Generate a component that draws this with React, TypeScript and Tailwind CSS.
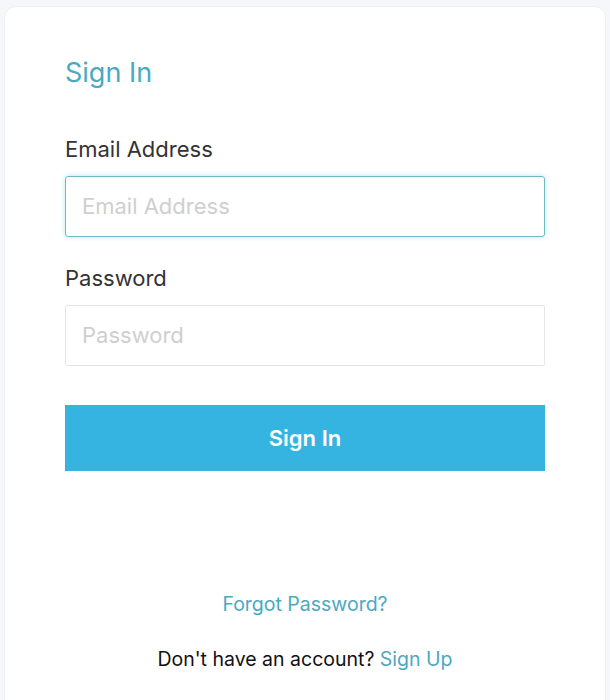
import React from "react";

export default function App() {
  return (
    <div className="min-h-[700px] w-[610px] bg-[#f6f7fb] pt-[6px] pl-[4px] pr-[4px] overflow-hidden" style={{ fontFamily: 'Inter, "Liberation Sans", sans-serif' }}>
      <div className="bg-white rounded-t-[12px] border border-[#eef0f4] h-[720px] px-[60px] pt-[44px]">
        <h1 className="text-[27px] leading-[44px] text-[#4ba9c1] font-normal">Sign In</h1>
        <div className="mt-[38px]">
          <label className="block text-[22px] leading-[32px] text-[#333333]">Email Address</label>
          <div className="mt-[11px] h-[61px] rounded-[3px] border border-[#6fb8c4] shadow-[0_0_5px_rgba(102,200,230,0.45)] flex items-center px-[16px]">
            <span className="text-[22px] text-[#cfcfcf]">Email Address</span>
          </div>
        </div>
        <div className="mt-[25px]">
          <label className="block text-[22px] leading-[32px] text-[#333333]">Password</label>
          <div className="mt-[11px] h-[61px] rounded-[2px] border border-[#e6e6e6] flex items-center px-[16px]">
            <span className="text-[22px] text-[#cfcfcf]">Password</span>
          </div>
        </div>
        <button className="mt-[39px] w-full h-[66px] bg-[#35b4e2] text-white text-[22px] font-semibold">Sign In</button>
        <div className="mt-[119px] text-center text-[19.5px] leading-[28px] text-[#4ba9c1]">Forgot Password?</div>
        <div className="mt-[27px] text-center text-[19.5px] leading-[28px] text-[#111]">
          Don't have an account? <span className="text-[#4ba9c1]">Sign Up</span>
        </div>
      </div>
    </div>
  );
}
